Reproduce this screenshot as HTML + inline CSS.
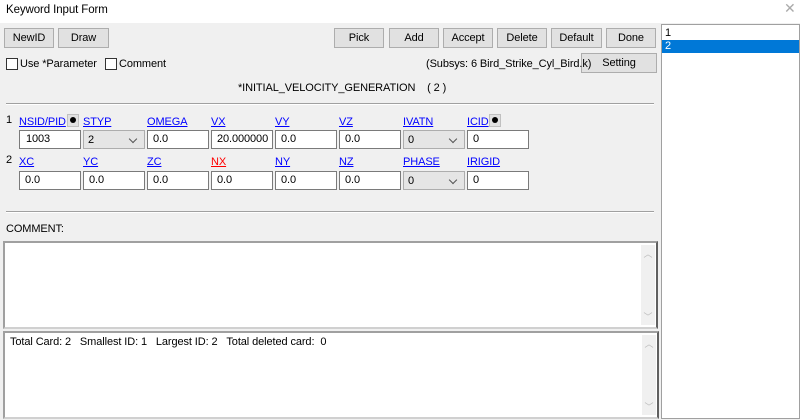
<!DOCTYPE html>
<html><head><style>
*{box-sizing:border-box;margin:0;padding:0}
body{width:800px;height:420px;background:#f0f0f0;font:11px "Liberation Sans",sans-serif;color:#000;position:relative;overflow:hidden;letter-spacing:-0.1px}
.a{position:absolute;white-space:nowrap}
.btn{position:absolute;background:#e1e1e1;border:1px solid #adadad;text-align:center;line-height:19px;height:20px}
.lbl{position:absolute;color:#0000ff;text-decoration:underline;line-height:14px}
.in{position:absolute;background:#fff;border:1px solid #7a7a7a;height:19px;width:62px;padding-left:6px;line-height:17px;overflow:hidden;white-space:nowrap}
.sel{position:absolute;background:#e5e5e5;border:1px solid #adadad;height:19px;width:62px;padding-left:4px;line-height:18px}
.sel:after{content:"";position:absolute;right:8px;top:5px;width:5px;height:5px;border-right:1px solid #555;border-bottom:1px solid #555;transform:rotate(45deg)}
.pb{position:absolute;width:12px;height:13px;background:#e1e1e1;border:1px solid #c0c0c0}
.pb:after{content:"";position:absolute;left:2px;top:2px;width:6px;height:6px;border-radius:50%;background:#000}
.cb{position:absolute;width:12px;height:12px;background:#fff;border:1px solid #333}
.hr{position:absolute;height:2px;border-top:1px solid #a0a0a0;border-bottom:1px solid #fff}
.box{position:absolute;background:#fff;border:2px solid #a0a0a0;border-right-color:#606060;border-bottom-color:#d0d0d0}
.sb{position:absolute;right:1px;top:2px;bottom:2px;width:14px;background:#f0f0f0;color:#bbb;font-size:9px;text-align:center}
</style></head><body>
<div class="a" style="left:0;top:0;width:800px;height:23px;background:#fff"></div>
<div class="a" style="left:6px;top:2px;line-height:16px;font-size:11.5px">Keyword Input Form</div>
<div class="a" style="left:784px;top:0px;color:#aaa;font-size:14px;line-height:16px">✕</div>

<div class="btn" style="left:4px;top:28px;width:50px">NewID</div>
<div class="btn" style="left:58px;top:28px;width:51px">Draw</div>
<div class="btn" style="left:334px;top:28px;width:50px">Pick</div>
<div class="btn" style="left:389px;top:28px;width:50px">Add</div>
<div class="btn" style="left:443px;top:28px;width:50px">Accept</div>
<div class="btn" style="left:497px;top:28px;width:50px">Delete</div>
<div class="btn" style="left:551px;top:28px;width:51px">Default</div>
<div class="btn" style="left:606px;top:28px;width:50px">Done</div>
<div class="btn" style="left:581px;top:53px;width:76px">Setting</div>

<div class="cb" style="left:6px;top:58px"></div><div class="a" style="left:20px;top:58px">Use *Parameter</div>
<div class="cb" style="left:105px;top:58px"></div><div class="a" style="left:119px;top:58px">Comment</div>
<div class="a" style="left:426px;top:58px">(Subsys: 6 Bird_Strike_Cyl_Bird.k)</div>
<div class="a" style="left:238px;top:82px">*INITIAL_VELOCITY_GENERATION&nbsp;&nbsp;&nbsp;&nbsp;( 2 )</div>
<div class="hr" style="left:6px;top:103px;width:648px"></div>

<div class="a" style="left:6px;top:114px">1</div>
<div class="lbl" style="left:19px;top:115px">NSID/PID</div><div class="pb" style="left:67px;top:114px"></div>
<div class="lbl" style="left:83px;top:115px">STYP</div>
<div class="lbl" style="left:147px;top:115px">OMEGA</div>
<div class="lbl" style="left:211px;top:115px">VX</div>
<div class="lbl" style="left:275px;top:115px">VY</div>
<div class="lbl" style="left:339px;top:115px">VZ</div>
<div class="lbl" style="left:403px;top:115px">IVATN</div>
<div class="lbl" style="left:467px;top:115px">ICID</div><div class="pb" style="left:489px;top:114px"></div>
<div class="in" style="left:19px;top:130px">1003</div>
<div class="sel" style="left:83px;top:130px">2</div>
<div class="in" style="left:147px;top:130px;padding-left:5px">0.0</div>
<div class="in" style="left:211px;top:130px;padding-left:5px">20.000000</div>
<div class="in" style="left:275px;top:130px;padding-left:5px">0.0</div>
<div class="in" style="left:339px;top:130px;padding-left:5px">0.0</div>
<div class="sel" style="left:403px;top:130px">0</div>
<div class="in" style="left:467px;top:130px;padding-left:5px">0</div>

<div class="a" style="left:6px;top:154px">2</div>
<div class="lbl" style="left:19px;top:155px">XC</div>
<div class="lbl" style="left:83px;top:155px">YC</div>
<div class="lbl" style="left:147px;top:155px">ZC</div>
<div class="lbl" style="left:211px;top:155px;color:#ff0000">NX</div>
<div class="lbl" style="left:275px;top:155px">NY</div>
<div class="lbl" style="left:339px;top:155px">NZ</div>
<div class="lbl" style="left:403px;top:155px">PHASE</div>
<div class="lbl" style="left:467px;top:155px">IRIGID</div>
<div class="in" style="left:19px;top:171px;padding-left:5px">0.0</div>
<div class="in" style="left:83px;top:171px;padding-left:5px">0.0</div>
<div class="in" style="left:147px;top:171px;padding-left:5px">0.0</div>
<div class="in" style="left:211px;top:171px;padding-left:5px">0.0</div>
<div class="in" style="left:275px;top:171px;padding-left:5px">0.0</div>
<div class="in" style="left:339px;top:171px;padding-left:5px">0.0</div>
<div class="sel" style="left:403px;top:171px">0</div>
<div class="in" style="left:467px;top:171px;padding-left:5px">0</div>

<div class="hr" style="left:6px;top:211px;width:648px"></div>
<div class="a" style="left:6px;top:223px">COMMENT:</div>
<div class="box" style="left:3px;top:241px;width:655px;height:88px"><div class="sb"><div style="margin-top:2px">︿</div><div style="position:absolute;bottom:2px;width:14px">﹀</div></div></div>
<div class="box" style="left:3px;top:331px;width:656px;height:88px"><div class="a" style="left:5px;top:3px">Total Card: 2&nbsp;&nbsp;&nbsp;Smallest ID: 1&nbsp;&nbsp;&nbsp;Largest ID: 2&nbsp;&nbsp;&nbsp;Total deleted card:&nbsp;&nbsp;0</div><div class="sb"><div style="margin-top:2px">︿</div><div style="position:absolute;bottom:2px;width:14px">﹀</div></div></div>

<div class="a" style="left:661px;top:24px;width:139px;height:395px;background:#fff;border:1px solid #a0a0a0">
<div style="padding-left:3px;line-height:13px;margin-top:2px">1</div>
<div style="padding-left:3px;line-height:13px;background:#0078d7;color:#fff">2</div>
</div>
</body></html>
